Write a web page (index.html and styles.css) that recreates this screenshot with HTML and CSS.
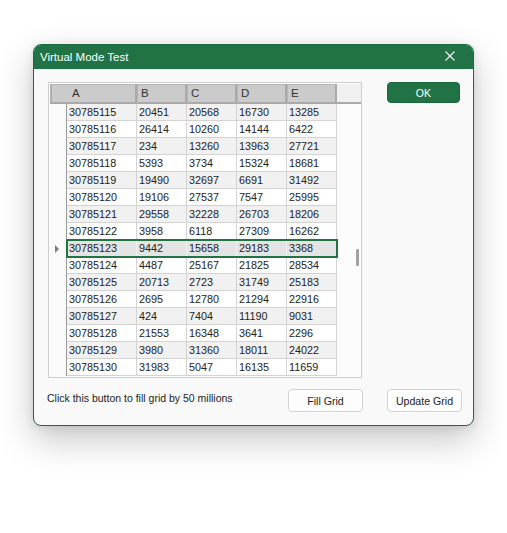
FILE: index.html
```html
<!DOCTYPE html>
<html>
<head>
<meta charset="utf-8">
<link rel="stylesheet" href="styles.css">
</head>
<body>
<div class="window">
  <div class="titlebar">
    <span class="title">Virtual Mode Test</span>
    <svg class="close" width="10" height="10" viewBox="0 0 10 10"><path d="M0.5 0.5 L9.5 9.5 M9.5 0.5 L0.5 9.5" stroke="#fff" stroke-width="1.1" fill="none"/></svg>
  </div>
  <div class="content">
    <div class="top">
      <div class="grid">
        <div class="ghead">
          <div class="hc hc-first">A</div>
          <div class="hc">B</div>
          <div class="hc">C</div>
          <div class="hc">D</div>
          <div class="hc">E</div>
          <div class="hc-fill"></div>
        </div>
        <div class="gbody">
          <div class="rows">
            <div class="row alt"><div class="rh"></div><div class="cells"><div class="c ca">30785115</div><div class="c">20451</div><div class="c">20568</div><div class="c">16730</div><div class="c">13285</div></div></div>
            <div class="row"><div class="rh"></div><div class="cells"><div class="c ca">30785116</div><div class="c">26414</div><div class="c">10260</div><div class="c">14144</div><div class="c">6422</div></div></div>
            <div class="row alt"><div class="rh"></div><div class="cells"><div class="c ca">30785117</div><div class="c">234</div><div class="c">13260</div><div class="c">13963</div><div class="c">27721</div></div></div>
            <div class="row"><div class="rh"></div><div class="cells"><div class="c ca">30785118</div><div class="c">5393</div><div class="c">3734</div><div class="c">15324</div><div class="c">18681</div></div></div>
            <div class="row alt"><div class="rh"></div><div class="cells"><div class="c ca">30785119</div><div class="c">19490</div><div class="c">32697</div><div class="c">6691</div><div class="c">31492</div></div></div>
            <div class="row"><div class="rh"></div><div class="cells"><div class="c ca">30785120</div><div class="c">19106</div><div class="c">27537</div><div class="c">7547</div><div class="c">25995</div></div></div>
            <div class="row alt"><div class="rh"></div><div class="cells"><div class="c ca">30785121</div><div class="c">29558</div><div class="c">32228</div><div class="c">26703</div><div class="c">18206</div></div></div>
            <div class="row"><div class="rh"></div><div class="cells"><div class="c ca">30785122</div><div class="c">3958</div><div class="c">6118</div><div class="c">27309</div><div class="c">16262</div></div></div>
            <div class="row sel"><div class="rh"><span class="arrow"></span></div><div class="cells"><div class="c ca">30785123</div><div class="c">9442</div><div class="c">15658</div><div class="c">29183</div><div class="c">3368</div></div></div>
            <div class="row"><div class="rh"></div><div class="cells"><div class="c ca">30785124</div><div class="c">4487</div><div class="c">25167</div><div class="c">21825</div><div class="c">28534</div></div></div>
            <div class="row alt"><div class="rh"></div><div class="cells"><div class="c ca">30785125</div><div class="c">20713</div><div class="c">2723</div><div class="c">31749</div><div class="c">25183</div></div></div>
            <div class="row"><div class="rh"></div><div class="cells"><div class="c ca">30785126</div><div class="c">2695</div><div class="c">12780</div><div class="c">21294</div><div class="c">22916</div></div></div>
            <div class="row alt"><div class="rh"></div><div class="cells"><div class="c ca">30785127</div><div class="c">424</div><div class="c">7404</div><div class="c">11190</div><div class="c">9031</div></div></div>
            <div class="row"><div class="rh"></div><div class="cells"><div class="c ca">30785128</div><div class="c">21553</div><div class="c">16348</div><div class="c">3641</div><div class="c">2296</div></div></div>
            <div class="row alt"><div class="rh"></div><div class="cells"><div class="c ca">30785129</div><div class="c">3980</div><div class="c">31360</div><div class="c">18011</div><div class="c">24022</div></div></div>
            <div class="row"><div class="rh"></div><div class="cells"><div class="c ca">30785130</div><div class="c">31983</div><div class="c">5047</div><div class="c">16135</div><div class="c">11659</div></div></div>
          </div>
          <div class="vscroll"><div class="thumb"></div></div>
        </div>
      </div>
      <button class="btn btn-ok">OK</button>
    </div>
    <div class="bottom">
      <span class="hint">Click this button to fill grid by 50 millions</span>
      <button class="btn">Fill Grid</button>
      <button class="btn">Update Grid</button>
    </div>
  </div>
</div>
</body>
</html>
```
FILE: styles.css
```css
* { box-sizing: border-box; }
html, body { margin: 0; background: #ffffff; }
body {
  min-height: 533px;
  padding: 44px 0 0 33px;
  font-family: "Liberation Sans", Arial, sans-serif;
  color: #222;
}
.window {
  width: 441px;
  height: 382px;
  border: 1px solid #1c6a3f;
  border-radius: 8px;
  overflow: hidden;
  background: #f9f9f9;
  box-shadow: 0 14px 36px rgba(0,0,0,0.22), 0 2px 10px rgba(0,0,0,0.10);
}
.titlebar {
  height: 24px;
  background: #217346;
  display: flex;
  align-items: center;
  padding: 0 18px 1px 6px;
  color: #fff;
}
.title { flex: 1; font-size: 11.5px; }
.close { display: block; margin-top: -2px; }
.content { padding: 13px 12px 0 14px; }
.top { display: flex; align-items: flex-start; }
.grid {
  width: 314px;
  height: 296px;
  border: 1px solid #cdcdcd;
  padding: 1px 0 0 1px;
  background: #fcfcfc;
}
.ghead { display: flex; height: 20px; font-size: 11.5px; color: #333; }
.hc {
  width: 50px;
  background: #cbcbcb;
  border: 1px solid #b5b5b5;
  border-right: 2px solid #a9a9a9;
  border-bottom: 2px solid #a9a9a9;
  padding: 2px 0 0 3px;
}
.hc-first { width: 87px; padding-left: 20px; border-left: 2px solid #b0b0b0; }
.hc-fill { flex: 1; background: #f0f0f0; border-bottom: 2px solid #a9a9a9; }
.gbody { display: flex; }
.rows { width: 287px; }
.row { display: flex; height: 17px; }
.rh {
  width: 17px;
  background: #fafafa;
  border-right: 1px solid #9c9c9c;
  display: flex;
  align-items: center;
  justify-content: center;
}
.arrow {
  width: 0; height: 0;
  border-top: 4px solid transparent;
  border-bottom: 4px solid transparent;
  border-left: 4px solid #7d7d7d;
  margin-left: -3px;
}
.cells { display: flex; width: 270px; background: #ffffff; }
.c {
  width: 50px;
  border-right: 1px solid #d3d3d3;
  border-bottom: 1px solid #d3d3d3;
  padding-left: 2px;
  font-size: 10.8px;
  line-height: 16px;
  color: #222;
  white-space: nowrap;
}
.ca { width: 70px; }
.alt .cells { background: #f1f1f1; }
.sel .cells {
  background: #e4e4e4;
  outline: 2px solid #217346;
  outline-offset: -1px;
  position: relative;
}
.sel .c { border-right-color: #efefef; }
.vscroll { width: 24px; background: #fcfcfc; }
.thumb {
  width: 3px;
  height: 17px;
  margin: 145px 0 0 19px;
  background: #a3a3a3;
  border-radius: 1px;
}
.btn {
  font-family: "Liberation Sans", Arial, sans-serif;
  font-size: 10.6px;
  color: #222;
  width: 75px;
  height: 23px;
  background: #fdfdfd;
  border: 1px solid #d2d2d2;
  border-radius: 4px;
  padding: 0;
}
.btn-ok {
  width: 73px;
  height: 21px;
  margin-left: 25px;
  background: #217346;
  border-color: #1b663c;
  color: #ffffff;
}
.bottom {
  display: flex;
  align-items: center;
  gap: 24px;
  margin: 11px -1px 0 -1px;
}
.hint { flex: 1; font-size: 10.5px; color: #222; padding-bottom: 6px; }
```
